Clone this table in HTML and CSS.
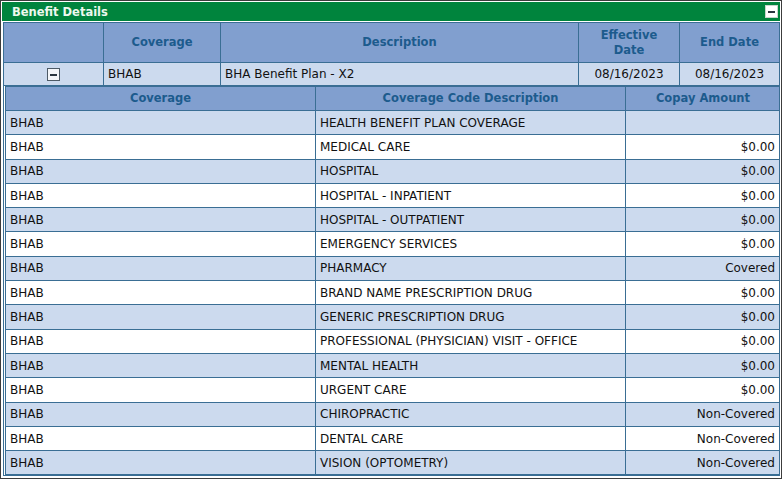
FILE: index.html
```html
<!DOCTYPE html>
<html>
<head>
<meta charset="utf-8">
<link rel="stylesheet" href="styles.css">
</head>
<body>
<div class="panel">
  <div class="title-bar">
    <span class="title">Benefit Details</span>
    <span class="toggle toggle-title"><span class="bar"></span></span>
  </div>
  <table class="plans">
    <colgroup>
      <col style="width:100px"><col style="width:117px"><col style="width:358px"><col style="width:101px"><col style="width:100px">
    </colgroup>
    <thead>
      <tr class="head">
        <th></th>
        <th>Coverage</th>
        <th>Description</th>
        <th>Effective<br>Date</th>
        <th>End Date</th>
      </tr>
    </thead>
    <tbody>
      <tr class="plan-row">
        <td class="center"><span class="toggle"><span class="bar"></span></span></td>
        <td>BHAB</td>
        <td>BHA Benefit Plan - X2</td>
        <td class="center">08/16/2023</td>
        <td class="center">08/16/2023</td>
      </tr>
      <tr>
        <td colspan="5" class="nest-cell">
          <table class="codes">
            <colgroup>
              <col style="width:310px"><col style="width:310px"><col style="width:155px">
            </colgroup>
            <thead>
              <tr class="head">
                <th>Coverage</th>
                <th>Coverage Code Description</th>
                <th>Copay Amount</th>
              </tr>
            </thead>
            <tbody>
              <tr class="alt"><td>BHAB</td><td>HEALTH BENEFIT PLAN COVERAGE</td><td class="amt"></td></tr>
              <tr><td>BHAB</td><td>MEDICAL CARE</td><td class="amt">$0.00</td></tr>
              <tr class="alt"><td>BHAB</td><td>HOSPITAL</td><td class="amt">$0.00</td></tr>
              <tr><td>BHAB</td><td>HOSPITAL - INPATIENT</td><td class="amt">$0.00</td></tr>
              <tr class="alt"><td>BHAB</td><td>HOSPITAL - OUTPATIENT</td><td class="amt">$0.00</td></tr>
              <tr><td>BHAB</td><td>EMERGENCY SERVICES</td><td class="amt">$0.00</td></tr>
              <tr class="alt"><td>BHAB</td><td>PHARMACY</td><td class="amt">Covered</td></tr>
              <tr><td>BHAB</td><td>BRAND NAME PRESCRIPTION DRUG</td><td class="amt">$0.00</td></tr>
              <tr class="alt"><td>BHAB</td><td>GENERIC PRESCRIPTION DRUG</td><td class="amt">$0.00</td></tr>
              <tr><td>BHAB</td><td>PROFESSIONAL (PHYSICIAN) VISIT - OFFICE</td><td class="amt">$0.00</td></tr>
              <tr class="alt"><td>BHAB</td><td>MENTAL HEALTH</td><td class="amt">$0.00</td></tr>
              <tr><td>BHAB</td><td>URGENT CARE</td><td class="amt">$0.00</td></tr>
              <tr class="alt"><td>BHAB</td><td>CHIROPRACTIC</td><td class="amt">Non-Covered</td></tr>
              <tr><td>BHAB</td><td>DENTAL CARE</td><td class="amt">Non-Covered</td></tr>
              <tr class="alt"><td>BHAB</td><td>VISION (OPTOMETRY)</td><td class="amt">Non-Covered</td></tr>
            </tbody>
          </table>
        </td>
      </tr>
    </tbody>
  </table>
</div>
</body>
</html>
```

FILE: styles.css
```css
html, body {
  margin: 0;
  padding: 0;
  background: #ffffff;
}
body {
  font-family: "DejaVu Sans", Verdana, sans-serif;
  font-size: 12px;
  color: #111111;
}
.panel {
  width: 782px;
  height: 479px;
  box-sizing: border-box;
  border: 1px solid #3c3c3c;
  padding: 1px 1px 0 1px;
  background: #ffffff;
  overflow: hidden;
}
.title-bar {
  height: 19px;
  background: #00843d;
  display: flex;
  align-items: center;
  justify-content: space-between;
  padding: 0 2px 0 10px;
}
.title {
  color: #eef8ee;
  font-weight: bold;
  font-size: 11.5px;
}
.toggle {
  display: inline-flex;
  align-items: center;
  justify-content: center;
  width: 11px;
  height: 11px;
  border: 1px solid #4d5a66;
  background: #f4f6f9;
  vertical-align: middle;
}
.toggle-title {
  border-color: #c8d6cc;
  background: #ffffff;
}
.toggle .bar {
  width: 7px;
  height: 2px;
  background: #2b3640;
}
table {
  border-collapse: collapse;
  table-layout: fixed;
}
.plans {
  width: 777px;
  margin: 1px 0 0 1px;
  border: 1px solid #3a6e94;
}
th, td {
  border: 1px solid #3a6e94;
  padding: 0 4px;
  white-space: nowrap;
  overflow: hidden;
}
.head th {
  background: #819fcf;
  color: #1c5b8d;
  font-weight: bold;
  font-size: 11.5px;
  text-align: center;
  line-height: 15px;
}
.plans .head th {
  height: 39px;
}
.plan-row td {
  background: #ccdaee;
  height: 22px;
}
.center {
  text-align: center;
}
.nest-cell {
  padding: 0 0 0 1px;
  border: none;
}
.codes {
  width: 776px;
  border: 1px solid #3a6e94;
}
.codes .head th {
  height: 23px;
}
.codes tbody td {
  height: 23.3px;
  background: #ffffff;
}
.codes tbody tr.alt td {
  background: #ccdaee;
}
.amt {
  text-align: right;
  padding-right: 5px;
}
```
